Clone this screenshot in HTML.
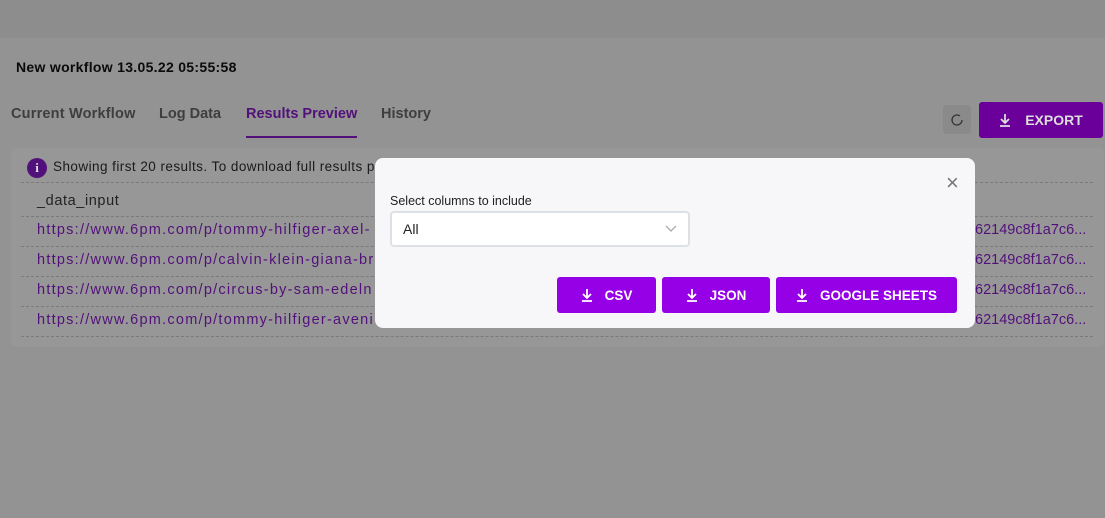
<!DOCTYPE html>
<html><head><style>
*{box-sizing:border-box;margin:0;padding:0}
body{width:1105px;height:518px;overflow:hidden;background:#939393;font-family:"Liberation Sans",sans-serif;position:relative}
.top{position:absolute;left:0;top:0;width:1105px;height:38px;background:#8d8d8d}
.title{position:absolute;left:16px;top:59px;font-size:14px;font-weight:bold;color:#0a0a0a;letter-spacing:0.3px}
.tab{position:absolute;top:106px;font-size:14.5px;font-weight:bold;color:#3e3e3e;letter-spacing:0}
.card{position:absolute;left:11px;top:148px;width:1093px;height:199px;background:#979797;border-radius:5px}
.row{position:absolute;left:21px;width:1072px;border-bottom:1px dashed #7a7a7a}
.link{position:absolute;left:37px;font-size:14.5px;color:#52117a;letter-spacing:1.25px;white-space:nowrap;width:338px;overflow:hidden}
.right{position:absolute;left:975px;font-size:14.5px;color:#52117a}
.modal{position:absolute;left:375px;top:158px;width:600px;height:170px;background:#f7f7fa;border-radius:8px}
.btn{position:absolute;top:119px;height:36px;background:#9500e6;color:#fff;border-radius:3px;font-weight:bold;font-size:13.5px;display:flex;align-items:center;justify-content:center;gap:12px}
</style></head><body>
<div class="top"></div>
<div class="title">New workflow 13.05.22 05:55:58</div>
<div class="tab" style="left:11px;letter-spacing:0.2px">Current Workflow</div>
<div class="tab" style="left:159px">Log Data</div>
<div class="tab" style="left:246px;color:#52117a">Results Preview</div>
<div style="position:absolute;left:246px;top:136px;width:111px;height:2px;background:#52117a"></div>
<div class="tab" style="left:381px">History</div>
<div style="position:absolute;left:943px;top:105px;width:28px;height:29px;background:#8a8a8a;border-radius:4px;display:flex;align-items:center;justify-content:center"><svg width="14" height="14" viewBox="0 0 14 14"><path d="M12 7a5 5 0 1 1-2-4" fill="none" stroke="#333" stroke-width="1.3"/></svg></div>
<div style="position:absolute;left:979px;top:102px;width:124px;height:36px;background:#6a0099;border-radius:3px;color:#ddd;font-weight:bold;font-size:14px;display:flex;align-items:center;justify-content:center;gap:14px"><svg width="12" height="14" viewBox="0 0 12 14"><path d="M6 1v9M2 6l4 4 4-4M1 13h10" stroke="#ddd" stroke-width="1.8" fill="none"/></svg>EXPORT</div>
<div class="card"></div>
<div style="position:absolute;left:27px;top:158px;width:20px;height:20px;border-radius:50%;background:#52117a;color:#ddd;font-weight:bold;font-size:13px;text-align:center;line-height:20px;font-family:'Liberation Serif',serif">i</div>
<div style="position:absolute;left:53px;top:159px;font-size:13.5px;color:#1a1a1a;letter-spacing:0.45px;white-space:nowrap">Showing first 20 results. To download full results pr</div>
<div class="row" style="top:182px"></div>
<div style="position:absolute;left:37px;top:193px;font-size:14.5px;color:#222;letter-spacing:0.6px">_data_input</div>
<div class="row" style="top:216px"></div>
<div class="link" style="top:222px">https://www.6pm.com/p/tommy-hilfiger-axel-</div>
<div class="row" style="top:246px"></div>
<div class="link" style="top:252px">https://www.6pm.com/p/calvin-klein-giana-br</div>
<div class="row" style="top:276px"></div>
<div class="link" style="top:282px">https://www.6pm.com/p/circus-by-sam-edeln</div>
<div class="row" style="top:306px"></div>
<div class="link" style="top:312px">https://www.6pm.com/p/tommy-hilfiger-aveni</div>
<div class="row" style="top:336px"></div>
<div class="right" style="top:222px">62149c8f1a7c6...</div>
<div class="right" style="top:252px">62149c8f1a7c6...</div>
<div class="right" style="top:282px">62149c8f1a7c6...</div>
<div class="right" style="top:312px">62149c8f1a7c6...</div>
<div class="modal">
<div style="position:absolute;left:571px;top:16px;font-size:22px;color:#777;font-weight:300;line-height:18px">×</div>
<div style="position:absolute;left:15px;top:36px;font-size:12.5px;color:#222">Select columns to include</div>
<div style="position:absolute;left:15px;top:53px;width:300px;height:36px;background:#fff;border:2px solid #dde1e6;border-radius:4px">
<div style="position:absolute;left:11px;top:8px;font-size:14px;color:#222">All</div>
<svg style="position:absolute;left:273px;top:12px" width="12" height="8" viewBox="0 0 12 8"><path d="M1 1l5 5 5-5" fill="none" stroke="#aaa" stroke-width="1.3"/></svg>
</div>
<div class="btn" style="left:182px;width:99px"><svg width="12" height="14" viewBox="0 0 12 14"><path d="M6 1v9M2 6l4 4 4-4M1 13h10" stroke="#fff" stroke-width="1.8" fill="none"/></svg>CSV</div>
<div class="btn" style="left:287px;width:108px"><svg width="12" height="14" viewBox="0 0 12 14"><path d="M6 1v9M2 6l4 4 4-4M1 13h10" stroke="#fff" stroke-width="1.8" fill="none"/></svg>JSON</div>
<div class="btn" style="left:401px;width:181px"><svg width="12" height="14" viewBox="0 0 12 14"><path d="M6 1v9M2 6l4 4 4-4M1 13h10" stroke="#fff" stroke-width="1.8" fill="none"/></svg>GOOGLE SHEETS</div>
</div>
</body></html>
